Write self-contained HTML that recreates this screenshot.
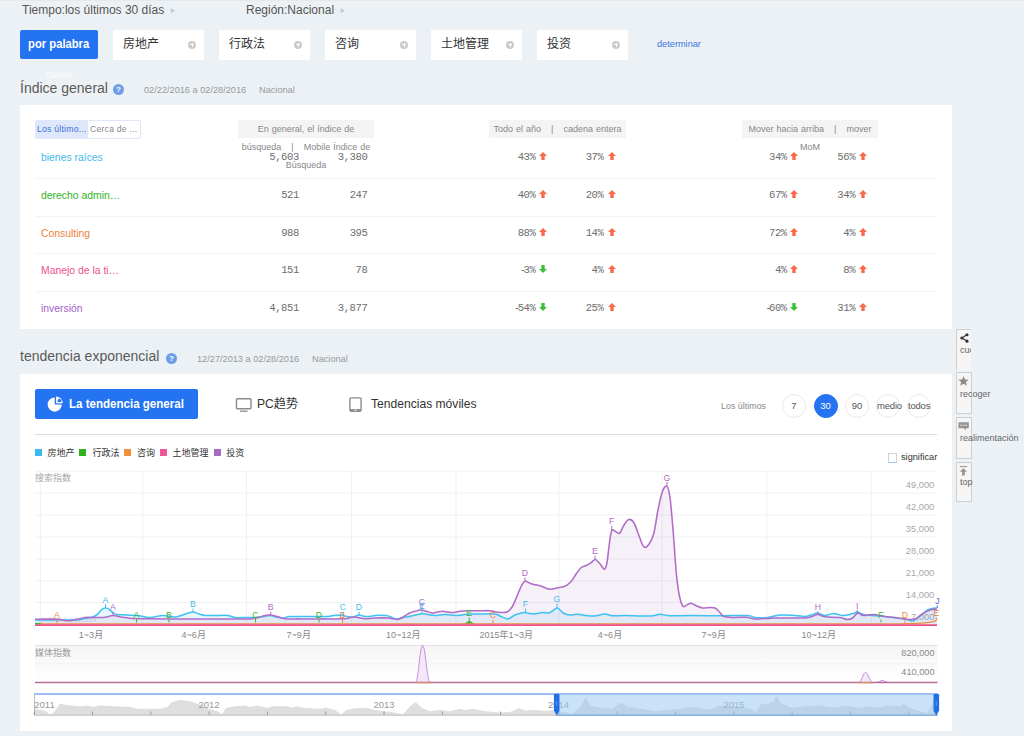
<!DOCTYPE html>
<html lang="es">
<head>
<meta charset="utf-8">
<title>Índice general</title>
<style>
*{box-sizing:border-box;margin:0;padding:0}
html,body{width:1024px;height:736px;overflow:hidden}
body{background:#ecf1f5;font-family:"Liberation Sans","Noto Sans CJK SC",sans-serif;color:#555;position:relative;font-size:12px}
.abs{position:absolute;white-space:nowrap}
.topline{left:0;top:0;width:1024px;height:1px;background:#e6e8e9}
.crumb{top:3px;font-size:12px;color:#555;line-height:15px}
.crumb i{font-style:normal;color:#c3c9ce;font-size:5px;margin-left:6px;position:relative;top:-2px}
.kwbtn{left:20px;top:30px;width:78px;height:29px;background:#2473f0;border-radius:2px;color:#fff;font-weight:bold;font-size:12px;line-height:29px;text-align:center}
.clave{left:45px;top:68px;color:#f6f9fb;font-weight:bold;font-size:11.2px}
.kw{top:30px;width:91px;height:30px;background:#fff;font-size:12px;color:#333;line-height:28px;padding-left:10px}
.kw b{position:absolute;right:8px;top:10.5px;width:8px;height:8px;border-radius:50%;background:#cbcbcb;font-weight:normal}
.kw b:before{content:"";position:absolute;left:2px;top:3.5px;width:4px;height:1px;background:#fff}
.kw b:after{content:"";position:absolute;left:3.5px;top:2px;width:1px;height:4px;background:#fff}
.det{left:657px;top:39px;font-size:9.2px;color:#3a76e0}
.h2{left:20px;font-size:14px;color:#5a5a5a;line-height:20px}
.q{width:11px;height:11px;border-radius:50%;background:#6d9fe8;color:#fff;font-size:8px;font-weight:bold;line-height:11px;text-align:center}
.sm{font-size:9.2px;color:#999;line-height:12px}
.panel{left:20px;width:932px;background:#fff}

#p1 .pill{position:absolute;top:15px;height:18px;background:#f4f4f4;color:#888;font-size:9px;line-height:18px;text-align:center;white-space:normal;word-spacing:0.5px}
#p1 .pill span{margin:0 10px}
.tog{position:absolute;left:15px;top:15px;width:106px;height:19px;border:1px solid #dfe8fb;border-radius:2px;font-size:8.6px;letter-spacing:0.25px;line-height:17px;color:#888;background:#fff}
.tog u{text-decoration:none;display:inline-block;width:52px;height:17px;background:#dfe8fb;color:#3a6fd8;padding-left:1px;margin-right:2px;vertical-align:top}
.row{position:absolute;left:15px;width:901px;height:38px;border-top:1px solid #f4f4f4}
.row.first{border-top:0}
.row .nm{position:absolute;left:6px;top:9px;font-size:10.4px;line-height:16px}
.row .v{position:absolute;top:8px;font-family:"Liberation Mono",monospace;font-size:10.6px;letter-spacing:-0.4px;line-height:16px;color:#6e6e6e;text-align:right;width:60px}
.up,.dn{position:absolute;top:11px;width:8px;height:8px}

.tabbtn{left:35px;top:389px;width:163px;height:30px;background:#2473f0;border-radius:2px;color:#fff;font-weight:bold;font-size:12px;line-height:31px;padding-left:34px}
.sq{display:inline-block;transform-origin:0 50%}
.tab{top:389px;height:30px;line-height:31px;font-size:12.1px;color:#333}
.hr2{left:35px;top:434px;width:902px;height:1px;background:#dcdcdc}
.lg{top:447px;font-size:9px;line-height:12px;color:#333}
.lgs{top:449px;width:7px;height:7px}
.rng{top:394px;width:24px;height:24px;border-radius:50%;border:1px solid #e9e9e9;background:#fff;color:#555;font-size:9.5px;line-height:22px;text-align:center}
.rng.on{background:#2473f0;border-color:#2473f0;color:#fff}
.side{left:956px;width:16px;background:#f5f5f5;border:1px solid #cfcfcf;font-size:9px;color:#666;overflow:visible}
.side span{position:absolute;left:3px;white-space:nowrap}
</style>
</head>
<body>
<div class="abs topline"></div>
<div class="abs crumb" style="left:22px">Tiempo:los últimos 30 días<i>▶</i></div>
<div class="abs crumb" style="left:246px">Región:Nacional<i>▶</i></div>

<div class="abs kwbtn"><span class="sq" style="transform:scaleX(.935);transform-origin:50% 50%">por palabra</span></div>
<div class="abs clave">clave</div>
<div class="abs kw" style="left:113px">房地产<b></b></div>
<div class="abs kw" style="left:219px">行政法<b></b></div>
<div class="abs kw" style="left:325px">咨询<b></b></div>
<div class="abs kw" style="left:431px">土地管理<b></b></div>
<div class="abs kw" style="left:537px">投资<b></b></div>
<div class="abs det">determinar</div>

<div class="abs h2" style="top:78px">Índice general</div>
<div class="abs q" style="left:113px;top:84px">?</div>
<div class="abs sm" style="left:144px;top:84px">02/22/2016 a 02/28/2016</div>
<div class="abs sm" style="left:259px;top:84px">Nacional</div>

<div class="abs panel" id="p1" style="top:105px;height:224px">
<div class="tog"><u>Los último...</u>Cerca de ...</div>
<div class="pill" style="left:218px;width:136px">En general, el índice de búsqueda<span>|</span>Mobile Índice de Búsqueda</div>
<div class="pill" style="left:469px;width:137px">Todo el año<span>|</span>cadena entera</div>
<div class="pill" style="left:722px;width:136px">Mover hacia arriba<span>|</span>mover MoM</div>
<div class="row first" style="top:36px"><span class="nm" style="color:#45b9ec">bienes raíces</span><span class="v" style="left:204.0px">5,603</span><span class="v" style="left:272.5px">3,380</span><span class="v" style="left:440.5px">43%</span><svg class="up" style="left:504px" viewBox="0 0 8 8"><path d="M4 0L8 4H5.7V8H2.3V4H0Z" fill="#f96a4a"/></svg><span class="v" style="left:508.5px">37%</span><svg class="up" style="left:573px" viewBox="0 0 8 8"><path d="M4 0L8 4H5.7V8H2.3V4H0Z" fill="#f96a4a"/></svg><span class="v" style="left:691.8px">34%</span><svg class="up" style="left:755px" viewBox="0 0 8 8"><path d="M4 0L8 4H5.7V8H2.3V4H0Z" fill="#f96a4a"/></svg><span class="v" style="left:760.2px">56%</span><svg class="up" style="left:824px" viewBox="0 0 8 8"><path d="M4 0L8 4H5.7V8H2.3V4H0Z" fill="#f96a4a"/></svg></div>
<div class="row" style="top:73px"><span class="nm" style="color:#2fb31e">derecho admin…</span><span class="v" style="left:204.0px">521</span><span class="v" style="left:272.5px">247</span><span class="v" style="left:440.5px">40%</span><svg class="up" style="left:504px" viewBox="0 0 8 8"><path d="M4 0L8 4H5.7V8H2.3V4H0Z" fill="#f96a4a"/></svg><span class="v" style="left:508.5px">20%</span><svg class="up" style="left:573px" viewBox="0 0 8 8"><path d="M4 0L8 4H5.7V8H2.3V4H0Z" fill="#f96a4a"/></svg><span class="v" style="left:691.8px">67%</span><svg class="up" style="left:755px" viewBox="0 0 8 8"><path d="M4 0L8 4H5.7V8H2.3V4H0Z" fill="#f96a4a"/></svg><span class="v" style="left:760.2px">34%</span><svg class="up" style="left:824px" viewBox="0 0 8 8"><path d="M4 0L8 4H5.7V8H2.3V4H0Z" fill="#f96a4a"/></svg></div>
<div class="row" style="top:111px"><span class="nm" style="color:#ef7f3a">Consulting</span><span class="v" style="left:204.0px">988</span><span class="v" style="left:272.5px">395</span><span class="v" style="left:440.5px">88%</span><svg class="up" style="left:504px" viewBox="0 0 8 8"><path d="M4 0L8 4H5.7V8H2.3V4H0Z" fill="#f96a4a"/></svg><span class="v" style="left:508.5px">14%</span><svg class="up" style="left:573px" viewBox="0 0 8 8"><path d="M4 0L8 4H5.7V8H2.3V4H0Z" fill="#f96a4a"/></svg><span class="v" style="left:691.8px">72%</span><svg class="up" style="left:755px" viewBox="0 0 8 8"><path d="M4 0L8 4H5.7V8H2.3V4H0Z" fill="#f96a4a"/></svg><span class="v" style="left:760.2px">4%</span><svg class="up" style="left:824px" viewBox="0 0 8 8"><path d="M4 0L8 4H5.7V8H2.3V4H0Z" fill="#f96a4a"/></svg></div>
<div class="row" style="top:148px"><span class="nm" style="color:#f0508c">Manejo de la ti…</span><span class="v" style="left:204.0px">151</span><span class="v" style="left:272.5px">78</span><span class="v" style="left:440.5px"><span style="letter-spacing:-2.6px">-</span>3%</span><svg class="dn" style="left:504px" viewBox="0 0 8 8"><path d="M4 8L8 4H5.7V0H2.3V4H0Z" fill="#3cc03c"/></svg><span class="v" style="left:508.5px">4%</span><svg class="up" style="left:573px" viewBox="0 0 8 8"><path d="M4 0L8 4H5.7V8H2.3V4H0Z" fill="#f96a4a"/></svg><span class="v" style="left:691.8px">4%</span><svg class="up" style="left:755px" viewBox="0 0 8 8"><path d="M4 0L8 4H5.7V8H2.3V4H0Z" fill="#f96a4a"/></svg><span class="v" style="left:760.2px">8%</span><svg class="up" style="left:824px" viewBox="0 0 8 8"><path d="M4 0L8 4H5.7V8H2.3V4H0Z" fill="#f96a4a"/></svg></div>
<div class="row" style="top:186px"><span class="nm" style="color:#a460c4">inversión</span><span class="v" style="left:204.0px">4,851</span><span class="v" style="left:272.5px">3,877</span><span class="v" style="left:440.5px"><span style="letter-spacing:-2.6px">-</span>54%</span><svg class="dn" style="left:504px" viewBox="0 0 8 8"><path d="M4 8L8 4H5.7V0H2.3V4H0Z" fill="#3cc03c"/></svg><span class="v" style="left:508.5px">25%</span><svg class="up" style="left:573px" viewBox="0 0 8 8"><path d="M4 0L8 4H5.7V8H2.3V4H0Z" fill="#f96a4a"/></svg><span class="v" style="left:691.8px"><span style="letter-spacing:-2.6px">-</span>60%</span><svg class="dn" style="left:755px" viewBox="0 0 8 8"><path d="M4 8L8 4H5.7V0H2.3V4H0Z" fill="#3cc03c"/></svg><span class="v" style="left:760.2px">31%</span><svg class="up" style="left:824px" viewBox="0 0 8 8"><path d="M4 0L8 4H5.7V8H2.3V4H0Z" fill="#f96a4a"/></svg></div>
</div>

<div class="abs h2" style="top:346px">tendencia exponencial</div>
<div class="abs q" style="left:166px;top:353px">?</div>
<div class="abs sm" style="left:197px;top:353px">12/27/2013 a 02/28/2016</div>
<div class="abs sm" style="left:312px;top:353px">Nacional</div>

<div class="abs panel" id="p2" style="top:374px;height:357px"></div>
<svg class="abs" style="left:20px;top:375px" width="932" height="355" viewBox="20 375 932 355" font-family="Liberation Sans, Noto Sans CJK SC, sans-serif">
<g stroke="#f0f0f0" stroke-width="1">
<line x1="35" y1="471.2" x2="937" y2="471.2"/>
<line x1="35" y1="493.0" x2="937" y2="493.0"/>
<line x1="35" y1="515.0" x2="937" y2="515.0"/>
<line x1="35" y1="537.0" x2="937" y2="537.0"/>
<line x1="35" y1="559.0" x2="937" y2="559.0"/>
<line x1="35" y1="580.8" x2="937" y2="580.8"/>
<line x1="35" y1="602.6" x2="937" y2="602.6"/>
<line x1="40.3" y1="471" x2="40.3" y2="625"/>
<line x1="142.8" y1="471" x2="142.8" y2="625"/>
<line x1="246.6" y1="471" x2="246.6" y2="625"/>
<line x1="351.6" y1="471" x2="351.6" y2="625"/>
<line x1="456.0" y1="471" x2="456.0" y2="625"/>
<line x1="559.0" y1="471" x2="559.0" y2="625"/>
<line x1="662.0" y1="471" x2="662.0" y2="625"/>
<line x1="766.8" y1="471" x2="766.8" y2="625"/>
<line x1="871.2" y1="471" x2="871.2" y2="625"/>
</g>
<g font-size="9.3" fill="#a8a8a8" text-anchor="end">
<text x="934.3" y="488.4">49,000</text>
<text x="934.3" y="510.4">42,000</text>
<text x="934.3" y="532.4">35,000</text>
<text x="934.3" y="554.4">28,000</text>
<text x="934.3" y="576.1">21,000</text>
<text x="934.3" y="598.4">14,000</text>
<text x="934.3" y="620.4">7,000</text>
</g>
<text x="35" y="481.3" font-size="9" fill="#aaa">搜索指数</text>
<text x="38" y="622" font-size="7" fill="#ddd">@index.baidu.com</text>
<path d="M35.00 620.00 C38.33 620.00 48.33 620.00 55.00 620.00 C61.67 620.00 70.00 620.23 75.00 620.00 C80.00 619.77 82.08 619.10 85.00 618.60 C87.92 618.10 90.50 617.67 92.50 617.00 C94.50 616.33 95.58 615.72 97.00 614.60 C98.42 613.48 99.92 611.33 101.00 610.30 C102.08 609.27 102.75 608.78 103.50 608.40 C104.25 608.02 104.83 608.00 105.50 608.00 C106.17 608.00 106.75 608.02 107.50 608.40 C108.25 608.78 109.00 609.53 110.00 610.30 C111.00 611.07 112.25 612.30 113.50 613.00 C114.75 613.70 115.25 614.17 117.50 614.50 C119.75 614.83 123.67 614.83 127.00 615.00 C130.33 615.17 134.67 615.22 137.50 615.50 C140.33 615.78 141.92 616.37 144.00 616.70 C146.08 617.03 148.00 617.53 150.00 617.50 C152.00 617.47 153.92 616.83 156.00 616.50 C158.08 616.17 160.17 615.53 162.50 615.50 C164.83 615.47 167.75 616.05 170.00 616.30 C172.25 616.55 173.67 617.30 176.00 617.00 C178.33 616.70 181.25 615.33 184.00 614.50 C186.75 613.67 190.00 612.08 192.50 612.00 C195.00 611.92 196.92 613.42 199.00 614.00 C201.08 614.58 202.17 615.25 205.00 615.50 C207.83 615.75 212.25 615.50 216.00 615.50 C219.75 615.50 224.33 615.17 227.50 615.50 C230.67 615.83 232.08 617.17 235.00 617.50 C237.92 617.83 241.67 617.50 245.00 617.50 C248.33 617.50 252.17 617.62 255.00 617.50 C257.83 617.38 259.50 617.13 262.00 616.80 C264.50 616.47 267.67 615.47 270.00 615.50 C272.33 615.53 273.92 616.58 276.00 617.00 C278.08 617.42 280.17 618.08 282.50 618.00 C284.83 617.92 286.25 616.75 290.00 616.50 C293.75 616.25 299.17 616.50 305.00 616.50 C310.83 616.50 320.67 616.58 325.00 616.50 C329.33 616.42 328.92 616.25 331.00 616.00 C333.08 615.75 335.17 615.00 337.50 615.00 C339.83 615.00 342.50 615.67 345.00 616.00 C347.50 616.33 350.21 617.17 352.50 617.00 C354.79 616.83 357.00 615.17 358.75 615.00 C360.50 614.83 361.54 615.75 363.00 616.00 C364.46 616.25 365.08 616.62 367.50 616.50 C369.92 616.38 374.42 615.42 377.50 615.25 C380.58 615.08 383.75 615.21 386.00 615.50 C388.25 615.79 389.33 616.42 391.00 617.00 C392.67 617.58 394.00 618.88 396.00 619.00 C398.00 619.12 400.67 618.16 403.00 617.70 C405.33 617.24 407.83 616.70 410.00 616.25 C412.17 615.80 413.92 615.42 416.00 615.00 C418.08 614.58 420.33 613.78 422.50 613.75 C424.67 613.72 426.92 614.51 429.00 614.80 C431.08 615.09 433.17 615.47 435.00 615.50 C436.83 615.53 438.33 615.17 440.00 615.00 C441.67 614.83 443.17 614.50 445.00 614.50 C446.83 614.50 448.92 614.83 451.00 615.00 C453.08 615.17 455.17 615.57 457.50 615.50 C459.83 615.43 462.50 614.85 465.00 614.60 C467.50 614.35 469.33 614.10 472.50 614.00 C475.67 613.90 480.25 614.00 484.00 614.00 C487.75 614.00 492.17 613.58 495.00 614.00 C497.83 614.42 498.92 615.67 501.00 616.50 C503.08 617.33 505.83 618.83 507.50 619.00 C509.17 619.17 509.75 618.17 511.00 617.50 C512.25 616.83 513.50 615.68 515.00 615.00 C516.50 614.32 518.33 613.82 520.00 613.40 C521.67 612.98 523.50 612.50 525.00 612.50 C526.50 612.50 527.54 613.15 529.00 613.40 C530.46 613.65 532.25 614.03 533.75 614.00 C535.25 613.97 536.54 613.45 538.00 613.20 C539.46 612.95 540.71 612.53 542.50 612.50 C544.29 612.47 547.00 613.33 548.75 613.00 C550.50 612.67 551.62 611.33 553.00 610.50 C554.38 609.67 555.75 608.00 557.00 608.00 C558.25 608.00 559.38 609.62 560.50 610.50 C561.62 611.38 562.17 612.50 563.75 613.25 C565.33 614.00 567.71 614.83 570.00 615.00 C572.29 615.17 574.17 614.08 577.50 614.25 C580.83 614.42 586.67 615.79 590.00 616.00 C593.33 616.21 595.00 615.83 597.50 615.50 C600.00 615.17 602.50 613.96 605.00 614.00 C607.50 614.04 609.17 615.50 612.50 615.75 C615.83 616.00 618.75 615.46 625.00 615.50 C631.25 615.54 644.17 616.21 650.00 616.00 C655.83 615.79 656.67 614.29 660.00 614.25 C663.33 614.21 665.00 615.54 670.00 615.75 C675.00 615.96 681.67 615.51 690.00 615.50 C698.33 615.49 710.42 615.70 720.00 615.70 C729.58 615.70 741.67 615.20 747.50 615.50 C753.33 615.80 751.67 617.17 755.00 617.50 C758.33 617.83 763.33 617.92 767.50 617.50 C771.67 617.08 775.42 615.33 780.00 615.00 C784.58 614.67 790.83 615.25 795.00 615.50 C799.17 615.75 802.33 616.58 805.00 616.50 C807.67 616.42 808.92 615.58 811.00 615.00 C813.08 614.42 815.83 613.12 817.50 613.00 C819.17 612.88 819.75 613.88 821.00 614.30 C822.25 614.72 823.67 615.48 825.00 615.50 C826.33 615.52 827.54 614.73 829.00 614.40 C830.46 614.07 832.25 613.48 833.75 613.50 C835.25 613.52 836.54 614.17 838.00 614.50 C839.46 614.83 841.17 615.38 842.50 615.50 C843.83 615.62 844.75 615.37 846.00 615.20 C847.25 615.03 848.67 614.83 850.00 614.50 C851.33 614.17 852.75 613.62 854.00 613.20 C855.25 612.78 856.33 611.95 857.50 612.00 C858.67 612.05 859.75 613.00 861.00 613.50 C862.25 614.00 863.17 614.67 865.00 615.00 C866.83 615.33 869.50 615.33 872.00 615.50 C874.50 615.67 876.58 615.67 880.00 616.00 C883.42 616.33 888.33 617.00 892.50 617.50 C896.67 618.00 901.67 618.42 905.00 619.00 C908.33 619.58 910.67 621.00 912.50 621.00 C914.33 621.00 914.75 619.79 916.00 619.00 C917.25 618.21 918.67 617.28 920.00 616.25 C921.33 615.22 922.75 613.84 924.00 612.80 C925.25 611.76 926.17 610.70 927.50 610.00 C928.83 609.30 930.42 608.93 932.00 608.60 C933.58 608.27 936.17 608.10 937.00 608.00 L937.00 624.50 L35.00 624.50 Z" fill="#3fbdf0" fill-opacity="0.12"/>
<path d="M35.00 619.25 C38.75 619.25 52.08 619.00 57.50 619.25 C62.92 619.50 64.42 620.71 67.50 620.75 C70.58 620.79 73.08 620.04 76.00 619.50 C78.92 618.96 81.83 617.83 85.00 617.50 C88.17 617.17 91.67 617.53 95.00 617.50 C98.33 617.47 102.00 617.63 105.00 617.30 C108.00 616.97 110.33 615.55 113.00 615.50 C115.67 615.45 118.17 616.54 121.00 617.00 C123.83 617.46 126.00 617.95 130.00 618.25 C134.00 618.55 138.33 618.67 145.00 618.80 C151.67 618.92 160.83 618.97 170.00 619.00 C179.17 619.03 190.00 619.00 200.00 619.00 C210.00 619.00 221.67 619.00 230.00 619.00 C238.33 619.00 245.33 619.25 250.00 619.00 C254.67 618.75 255.67 618.03 258.00 617.50 C260.33 616.97 262.00 616.22 264.00 615.80 C266.00 615.38 267.83 614.88 270.00 615.00 C272.17 615.12 274.50 615.88 277.00 616.50 C279.50 617.12 281.17 618.35 285.00 618.75 C288.83 619.15 294.17 618.88 300.00 618.90 C305.83 618.92 312.50 618.92 320.00 618.90 C327.50 618.88 340.00 618.98 345.00 618.75 C350.00 618.52 348.33 617.79 350.00 617.50 C351.67 617.21 353.33 616.92 355.00 617.00 C356.67 617.08 358.33 617.71 360.00 618.00 C361.67 618.29 362.50 618.75 365.00 618.75 C367.50 618.75 371.17 618.12 375.00 618.00 C378.83 617.88 384.25 617.75 388.00 618.00 C391.75 618.25 394.83 619.75 397.50 619.50 C400.17 619.25 401.92 617.62 404.00 616.50 C406.08 615.38 408.17 613.67 410.00 612.80 C411.83 611.92 413.17 611.72 415.00 611.25 C416.83 610.78 419.00 609.96 421.00 610.00 C423.00 610.04 425.08 611.00 427.00 611.50 C428.92 612.00 430.75 612.92 432.50 613.00 C434.25 613.08 435.83 612.29 437.50 612.00 C439.17 611.71 440.83 611.25 442.50 611.25 C444.17 611.25 445.83 611.79 447.50 612.00 C449.17 612.21 450.42 612.62 452.50 612.50 C454.58 612.38 457.50 611.59 460.00 611.30 C462.50 611.01 464.17 610.84 467.50 610.75 C470.83 610.66 476.25 610.75 480.00 610.75 C483.75 610.75 486.67 610.46 490.00 610.75 C493.33 611.04 497.08 612.33 500.00 612.50 C502.92 612.67 505.42 612.79 507.50 611.75 C509.58 610.71 510.83 609.04 512.50 606.25 C514.17 603.46 516.04 598.33 517.50 595.00 C518.96 591.67 520.00 588.54 521.25 586.25 C522.50 583.96 523.33 581.67 525.00 581.25 C526.67 580.83 528.75 583.00 531.25 583.75 C533.75 584.50 536.88 584.83 540.00 585.75 C543.12 586.67 546.88 588.96 550.00 589.25 C553.12 589.54 556.25 588.00 558.75 587.50 C561.25 587.00 562.92 587.29 565.00 586.25 C567.08 585.21 569.38 583.33 571.25 581.25 C573.12 579.17 574.58 576.04 576.25 573.75 C577.92 571.46 579.58 568.88 581.25 567.50 C582.92 566.12 584.58 566.33 586.25 565.50 C587.92 564.67 589.71 563.50 591.25 562.50 C592.79 561.50 594.04 559.29 595.50 559.50 C596.96 559.71 598.50 562.12 600.00 563.75 C601.50 565.38 603.33 569.46 604.50 569.25 C605.67 569.04 606.17 566.96 607.00 562.50 C607.83 558.04 608.71 547.83 609.50 542.50 C610.29 537.17 610.83 532.38 611.75 530.50 C612.67 528.62 613.71 530.79 615.00 531.25 C616.29 531.71 618.04 534.21 619.50 533.25 C620.96 532.29 622.21 527.79 623.75 525.50 C625.29 523.21 627.08 520.00 628.75 519.50 C630.42 519.00 632.08 519.92 633.75 522.50 C635.42 525.08 637.08 530.96 638.75 535.00 C640.42 539.04 642.08 545.17 643.75 546.75 C645.42 548.33 647.08 546.67 648.75 544.50 C650.42 542.33 652.21 539.50 653.75 533.75 C655.29 528.00 656.54 517.08 658.00 510.00 C659.46 502.92 661.00 495.21 662.50 491.25 C664.00 487.29 665.75 485.21 667.00 486.25 C668.25 487.29 668.96 489.79 670.00 497.50 C671.04 505.21 672.21 520.00 673.25 532.50 C674.29 545.00 675.25 562.08 676.25 572.50 C677.25 582.92 678.12 589.38 679.25 595.00 C680.38 600.62 681.62 604.67 683.00 606.25 C684.38 607.83 686.12 605.00 687.50 604.50 C688.88 604.00 689.79 603.04 691.25 603.25 C692.71 603.46 694.38 604.96 696.25 605.75 C698.12 606.54 700.21 607.71 702.50 608.00 C704.79 608.29 707.92 607.50 710.00 607.50 C712.08 607.50 713.54 607.38 715.00 608.00 C716.46 608.62 717.29 609.88 718.75 611.25 C720.21 612.62 721.46 615.21 723.75 616.25 C726.04 617.29 728.79 617.34 732.50 617.50 C736.21 617.66 742.25 616.95 746.00 617.20 C749.75 617.45 751.83 618.77 755.00 619.00 C758.17 619.23 761.67 618.77 765.00 618.60 C768.33 618.43 770.83 618.10 775.00 618.00 C779.17 617.90 785.00 618.00 790.00 618.00 C795.00 618.00 801.50 618.20 805.00 618.00 C808.50 617.80 808.92 617.38 811.00 616.80 C813.08 616.22 815.50 614.60 817.50 614.50 C819.50 614.40 821.33 615.78 823.00 616.20 C824.67 616.62 824.67 616.78 827.50 617.00 C830.33 617.22 836.67 617.08 840.00 617.50 C843.33 617.92 845.42 619.42 847.50 619.50 C849.58 619.58 850.83 619.08 852.50 618.00 C854.17 616.92 856.08 613.57 857.50 613.00 C858.92 612.43 859.75 614.18 861.00 614.60 C862.25 615.02 863.50 615.47 865.00 615.50 C866.50 615.53 868.33 614.97 870.00 614.80 C871.67 614.63 873.33 614.37 875.00 614.50 C876.67 614.63 878.33 615.27 880.00 615.60 C881.67 615.93 882.50 616.18 885.00 616.50 C887.50 616.82 891.67 617.08 895.00 617.50 C898.33 617.92 901.67 618.75 905.00 619.00 C908.33 619.25 912.08 619.88 915.00 619.00 C917.92 618.12 920.00 615.25 922.50 613.75 C925.00 612.25 927.58 610.79 930.00 610.00 C932.42 609.21 935.83 609.17 937.00 609.00 L937.00 624.50 L35.00 624.50 Z" fill="#a568c2" fill-opacity="0.10"/>
<path d="M35.00 620.00 C38.33 620.00 48.33 620.00 55.00 620.00 C61.67 620.00 70.00 620.23 75.00 620.00 C80.00 619.77 82.08 619.10 85.00 618.60 C87.92 618.10 90.50 617.67 92.50 617.00 C94.50 616.33 95.58 615.72 97.00 614.60 C98.42 613.48 99.92 611.33 101.00 610.30 C102.08 609.27 102.75 608.78 103.50 608.40 C104.25 608.02 104.83 608.00 105.50 608.00 C106.17 608.00 106.75 608.02 107.50 608.40 C108.25 608.78 109.00 609.53 110.00 610.30 C111.00 611.07 112.25 612.30 113.50 613.00 C114.75 613.70 115.25 614.17 117.50 614.50 C119.75 614.83 123.67 614.83 127.00 615.00 C130.33 615.17 134.67 615.22 137.50 615.50 C140.33 615.78 141.92 616.37 144.00 616.70 C146.08 617.03 148.00 617.53 150.00 617.50 C152.00 617.47 153.92 616.83 156.00 616.50 C158.08 616.17 160.17 615.53 162.50 615.50 C164.83 615.47 167.75 616.05 170.00 616.30 C172.25 616.55 173.67 617.30 176.00 617.00 C178.33 616.70 181.25 615.33 184.00 614.50 C186.75 613.67 190.00 612.08 192.50 612.00 C195.00 611.92 196.92 613.42 199.00 614.00 C201.08 614.58 202.17 615.25 205.00 615.50 C207.83 615.75 212.25 615.50 216.00 615.50 C219.75 615.50 224.33 615.17 227.50 615.50 C230.67 615.83 232.08 617.17 235.00 617.50 C237.92 617.83 241.67 617.50 245.00 617.50 C248.33 617.50 252.17 617.62 255.00 617.50 C257.83 617.38 259.50 617.13 262.00 616.80 C264.50 616.47 267.67 615.47 270.00 615.50 C272.33 615.53 273.92 616.58 276.00 617.00 C278.08 617.42 280.17 618.08 282.50 618.00 C284.83 617.92 286.25 616.75 290.00 616.50 C293.75 616.25 299.17 616.50 305.00 616.50 C310.83 616.50 320.67 616.58 325.00 616.50 C329.33 616.42 328.92 616.25 331.00 616.00 C333.08 615.75 335.17 615.00 337.50 615.00 C339.83 615.00 342.50 615.67 345.00 616.00 C347.50 616.33 350.21 617.17 352.50 617.00 C354.79 616.83 357.00 615.17 358.75 615.00 C360.50 614.83 361.54 615.75 363.00 616.00 C364.46 616.25 365.08 616.62 367.50 616.50 C369.92 616.38 374.42 615.42 377.50 615.25 C380.58 615.08 383.75 615.21 386.00 615.50 C388.25 615.79 389.33 616.42 391.00 617.00 C392.67 617.58 394.00 618.88 396.00 619.00 C398.00 619.12 400.67 618.16 403.00 617.70 C405.33 617.24 407.83 616.70 410.00 616.25 C412.17 615.80 413.92 615.42 416.00 615.00 C418.08 614.58 420.33 613.78 422.50 613.75 C424.67 613.72 426.92 614.51 429.00 614.80 C431.08 615.09 433.17 615.47 435.00 615.50 C436.83 615.53 438.33 615.17 440.00 615.00 C441.67 614.83 443.17 614.50 445.00 614.50 C446.83 614.50 448.92 614.83 451.00 615.00 C453.08 615.17 455.17 615.57 457.50 615.50 C459.83 615.43 462.50 614.85 465.00 614.60 C467.50 614.35 469.33 614.10 472.50 614.00 C475.67 613.90 480.25 614.00 484.00 614.00 C487.75 614.00 492.17 613.58 495.00 614.00 C497.83 614.42 498.92 615.67 501.00 616.50 C503.08 617.33 505.83 618.83 507.50 619.00 C509.17 619.17 509.75 618.17 511.00 617.50 C512.25 616.83 513.50 615.68 515.00 615.00 C516.50 614.32 518.33 613.82 520.00 613.40 C521.67 612.98 523.50 612.50 525.00 612.50 C526.50 612.50 527.54 613.15 529.00 613.40 C530.46 613.65 532.25 614.03 533.75 614.00 C535.25 613.97 536.54 613.45 538.00 613.20 C539.46 612.95 540.71 612.53 542.50 612.50 C544.29 612.47 547.00 613.33 548.75 613.00 C550.50 612.67 551.62 611.33 553.00 610.50 C554.38 609.67 555.75 608.00 557.00 608.00 C558.25 608.00 559.38 609.62 560.50 610.50 C561.62 611.38 562.17 612.50 563.75 613.25 C565.33 614.00 567.71 614.83 570.00 615.00 C572.29 615.17 574.17 614.08 577.50 614.25 C580.83 614.42 586.67 615.79 590.00 616.00 C593.33 616.21 595.00 615.83 597.50 615.50 C600.00 615.17 602.50 613.96 605.00 614.00 C607.50 614.04 609.17 615.50 612.50 615.75 C615.83 616.00 618.75 615.46 625.00 615.50 C631.25 615.54 644.17 616.21 650.00 616.00 C655.83 615.79 656.67 614.29 660.00 614.25 C663.33 614.21 665.00 615.54 670.00 615.75 C675.00 615.96 681.67 615.51 690.00 615.50 C698.33 615.49 710.42 615.70 720.00 615.70 C729.58 615.70 741.67 615.20 747.50 615.50 C753.33 615.80 751.67 617.17 755.00 617.50 C758.33 617.83 763.33 617.92 767.50 617.50 C771.67 617.08 775.42 615.33 780.00 615.00 C784.58 614.67 790.83 615.25 795.00 615.50 C799.17 615.75 802.33 616.58 805.00 616.50 C807.67 616.42 808.92 615.58 811.00 615.00 C813.08 614.42 815.83 613.12 817.50 613.00 C819.17 612.88 819.75 613.88 821.00 614.30 C822.25 614.72 823.67 615.48 825.00 615.50 C826.33 615.52 827.54 614.73 829.00 614.40 C830.46 614.07 832.25 613.48 833.75 613.50 C835.25 613.52 836.54 614.17 838.00 614.50 C839.46 614.83 841.17 615.38 842.50 615.50 C843.83 615.62 844.75 615.37 846.00 615.20 C847.25 615.03 848.67 614.83 850.00 614.50 C851.33 614.17 852.75 613.62 854.00 613.20 C855.25 612.78 856.33 611.95 857.50 612.00 C858.67 612.05 859.75 613.00 861.00 613.50 C862.25 614.00 863.17 614.67 865.00 615.00 C866.83 615.33 869.50 615.33 872.00 615.50 C874.50 615.67 876.58 615.67 880.00 616.00 C883.42 616.33 888.33 617.00 892.50 617.50 C896.67 618.00 901.67 618.42 905.00 619.00 C908.33 619.58 910.67 621.00 912.50 621.00 C914.33 621.00 914.75 619.79 916.00 619.00 C917.25 618.21 918.67 617.28 920.00 616.25 C921.33 615.22 922.75 613.84 924.00 612.80 C925.25 611.76 926.17 610.70 927.50 610.00 C928.83 609.30 930.42 608.93 932.00 608.60 C933.58 608.27 936.17 608.10 937.00 608.00" fill="none" stroke="#3fc2f2" stroke-width="1.5" stroke-linejoin="round"/>
<path d="M35.00 619.25 C38.75 619.25 52.08 619.00 57.50 619.25 C62.92 619.50 64.42 620.71 67.50 620.75 C70.58 620.79 73.08 620.04 76.00 619.50 C78.92 618.96 81.83 617.83 85.00 617.50 C88.17 617.17 91.67 617.53 95.00 617.50 C98.33 617.47 102.00 617.63 105.00 617.30 C108.00 616.97 110.33 615.55 113.00 615.50 C115.67 615.45 118.17 616.54 121.00 617.00 C123.83 617.46 126.00 617.95 130.00 618.25 C134.00 618.55 138.33 618.67 145.00 618.80 C151.67 618.92 160.83 618.97 170.00 619.00 C179.17 619.03 190.00 619.00 200.00 619.00 C210.00 619.00 221.67 619.00 230.00 619.00 C238.33 619.00 245.33 619.25 250.00 619.00 C254.67 618.75 255.67 618.03 258.00 617.50 C260.33 616.97 262.00 616.22 264.00 615.80 C266.00 615.38 267.83 614.88 270.00 615.00 C272.17 615.12 274.50 615.88 277.00 616.50 C279.50 617.12 281.17 618.35 285.00 618.75 C288.83 619.15 294.17 618.88 300.00 618.90 C305.83 618.92 312.50 618.92 320.00 618.90 C327.50 618.88 340.00 618.98 345.00 618.75 C350.00 618.52 348.33 617.79 350.00 617.50 C351.67 617.21 353.33 616.92 355.00 617.00 C356.67 617.08 358.33 617.71 360.00 618.00 C361.67 618.29 362.50 618.75 365.00 618.75 C367.50 618.75 371.17 618.12 375.00 618.00 C378.83 617.88 384.25 617.75 388.00 618.00 C391.75 618.25 394.83 619.75 397.50 619.50 C400.17 619.25 401.92 617.62 404.00 616.50 C406.08 615.38 408.17 613.67 410.00 612.80 C411.83 611.92 413.17 611.72 415.00 611.25 C416.83 610.78 419.00 609.96 421.00 610.00 C423.00 610.04 425.08 611.00 427.00 611.50 C428.92 612.00 430.75 612.92 432.50 613.00 C434.25 613.08 435.83 612.29 437.50 612.00 C439.17 611.71 440.83 611.25 442.50 611.25 C444.17 611.25 445.83 611.79 447.50 612.00 C449.17 612.21 450.42 612.62 452.50 612.50 C454.58 612.38 457.50 611.59 460.00 611.30 C462.50 611.01 464.17 610.84 467.50 610.75 C470.83 610.66 476.25 610.75 480.00 610.75 C483.75 610.75 486.67 610.46 490.00 610.75 C493.33 611.04 497.08 612.33 500.00 612.50 C502.92 612.67 505.42 612.79 507.50 611.75 C509.58 610.71 510.83 609.04 512.50 606.25 C514.17 603.46 516.04 598.33 517.50 595.00 C518.96 591.67 520.00 588.54 521.25 586.25 C522.50 583.96 523.33 581.67 525.00 581.25 C526.67 580.83 528.75 583.00 531.25 583.75 C533.75 584.50 536.88 584.83 540.00 585.75 C543.12 586.67 546.88 588.96 550.00 589.25 C553.12 589.54 556.25 588.00 558.75 587.50 C561.25 587.00 562.92 587.29 565.00 586.25 C567.08 585.21 569.38 583.33 571.25 581.25 C573.12 579.17 574.58 576.04 576.25 573.75 C577.92 571.46 579.58 568.88 581.25 567.50 C582.92 566.12 584.58 566.33 586.25 565.50 C587.92 564.67 589.71 563.50 591.25 562.50 C592.79 561.50 594.04 559.29 595.50 559.50 C596.96 559.71 598.50 562.12 600.00 563.75 C601.50 565.38 603.33 569.46 604.50 569.25 C605.67 569.04 606.17 566.96 607.00 562.50 C607.83 558.04 608.71 547.83 609.50 542.50 C610.29 537.17 610.83 532.38 611.75 530.50 C612.67 528.62 613.71 530.79 615.00 531.25 C616.29 531.71 618.04 534.21 619.50 533.25 C620.96 532.29 622.21 527.79 623.75 525.50 C625.29 523.21 627.08 520.00 628.75 519.50 C630.42 519.00 632.08 519.92 633.75 522.50 C635.42 525.08 637.08 530.96 638.75 535.00 C640.42 539.04 642.08 545.17 643.75 546.75 C645.42 548.33 647.08 546.67 648.75 544.50 C650.42 542.33 652.21 539.50 653.75 533.75 C655.29 528.00 656.54 517.08 658.00 510.00 C659.46 502.92 661.00 495.21 662.50 491.25 C664.00 487.29 665.75 485.21 667.00 486.25 C668.25 487.29 668.96 489.79 670.00 497.50 C671.04 505.21 672.21 520.00 673.25 532.50 C674.29 545.00 675.25 562.08 676.25 572.50 C677.25 582.92 678.12 589.38 679.25 595.00 C680.38 600.62 681.62 604.67 683.00 606.25 C684.38 607.83 686.12 605.00 687.50 604.50 C688.88 604.00 689.79 603.04 691.25 603.25 C692.71 603.46 694.38 604.96 696.25 605.75 C698.12 606.54 700.21 607.71 702.50 608.00 C704.79 608.29 707.92 607.50 710.00 607.50 C712.08 607.50 713.54 607.38 715.00 608.00 C716.46 608.62 717.29 609.88 718.75 611.25 C720.21 612.62 721.46 615.21 723.75 616.25 C726.04 617.29 728.79 617.34 732.50 617.50 C736.21 617.66 742.25 616.95 746.00 617.20 C749.75 617.45 751.83 618.77 755.00 619.00 C758.17 619.23 761.67 618.77 765.00 618.60 C768.33 618.43 770.83 618.10 775.00 618.00 C779.17 617.90 785.00 618.00 790.00 618.00 C795.00 618.00 801.50 618.20 805.00 618.00 C808.50 617.80 808.92 617.38 811.00 616.80 C813.08 616.22 815.50 614.60 817.50 614.50 C819.50 614.40 821.33 615.78 823.00 616.20 C824.67 616.62 824.67 616.78 827.50 617.00 C830.33 617.22 836.67 617.08 840.00 617.50 C843.33 617.92 845.42 619.42 847.50 619.50 C849.58 619.58 850.83 619.08 852.50 618.00 C854.17 616.92 856.08 613.57 857.50 613.00 C858.92 612.43 859.75 614.18 861.00 614.60 C862.25 615.02 863.50 615.47 865.00 615.50 C866.50 615.53 868.33 614.97 870.00 614.80 C871.67 614.63 873.33 614.37 875.00 614.50 C876.67 614.63 878.33 615.27 880.00 615.60 C881.67 615.93 882.50 616.18 885.00 616.50 C887.50 616.82 891.67 617.08 895.00 617.50 C898.33 617.92 901.67 618.75 905.00 619.00 C908.33 619.25 912.08 619.88 915.00 619.00 C917.92 618.12 920.00 615.25 922.50 613.75 C925.00 612.25 927.58 610.79 930.00 610.00 C932.42 609.21 935.83 609.17 937.00 609.00" fill="none" stroke="#b06cc6" stroke-width="1.55" stroke-linejoin="round"/>
<path d="M461.5 624 C466 623.6 467 620.9 469.3 620.9 C471.6 620.9 472.6 623.6 477 624Z" fill="#3cb52c"/>
<path d="M35 623.8H900C915 623.8 925 623 931 622.2C935 621.6 936.6 620.6 937 618.6" fill="none" stroke="#ee8a3c" stroke-width="1.3"/>
<path d="M35 625.1H937" stroke="#ee4f86" stroke-width="1.6"/>
<path d="M35 623.6H40.5" stroke="#3cb52c" stroke-width="1.2"/>
<g font-size="9.8" text-anchor="middle">
<text transform="translate(57.00 618.00) scale(.89 1)" fill="#ee8a3c">A</text>
<path d="M57.00 619.50V623.00" stroke="#ee8a3c" stroke-width="1"/>
<text transform="translate(105.50 602.50) scale(.89 1)" fill="#45bdf0">A</text>
<path d="M105.50 604.00V608.00" stroke="#45bdf0" stroke-width="1"/>
<text transform="translate(113.00 610.25) scale(.89 1)" fill="#b06cc6">A</text>
<path d="M113.00 611.75V615.50" stroke="#b06cc6" stroke-width="1"/>
<text transform="translate(136.50 617.50) scale(.89 1)" fill="#3cb52c">A</text>
<path d="M136.50 619.00V622.50" stroke="#3cb52c" stroke-width="1"/>
<text transform="translate(169.00 617.50) scale(.89 1)" fill="#3cb52c">B</text>
<path d="M169.00 619.00V622.50" stroke="#3cb52c" stroke-width="1"/>
<text transform="translate(193.00 607.25) scale(.89 1)" fill="#45bdf0">B</text>
<path d="M193.00 608.75V612.00" stroke="#45bdf0" stroke-width="1"/>
<text transform="translate(255.50 617.50) scale(.89 1)" fill="#3cb52c">C</text>
<path d="M255.50 619.00V622.50" stroke="#3cb52c" stroke-width="1"/>
<text transform="translate(270.75 610.25) scale(.89 1)" fill="#b06cc6">B</text>
<path d="M270.75 611.75V615.00" stroke="#b06cc6" stroke-width="1"/>
<text transform="translate(319.00 618.00) scale(.89 1)" fill="#3cb52c">D</text>
<path d="M319.00 619.50V622.50" stroke="#3cb52c" stroke-width="1"/>
<text transform="translate(342.50 618.00) scale(.89 1)" fill="#ee8a3c">B</text>
<path d="M342.50 619.50V623.00" stroke="#ee8a3c" stroke-width="1"/>
<text transform="translate(343.00 610.25) scale(.89 1)" fill="#45bdf0">C</text>
<path d="M343.00 611.75V615.00" stroke="#45bdf0" stroke-width="1"/>
<text transform="translate(359.00 610.25) scale(.89 1)" fill="#45bdf0">D</text>
<path d="M359.00 611.75V615.00" stroke="#45bdf0" stroke-width="1"/>
<text transform="translate(422.00 608.50) scale(.89 1)" fill="#45bdf0">E</text>
<path d="M422.00 610.00V613.75" stroke="#45bdf0" stroke-width="1"/>
<text transform="translate(422.00 604.75) scale(.89 1)" fill="#b06cc6">C</text>
<path d="M422.00 606.25V610.00" stroke="#b06cc6" stroke-width="1"/>
<text transform="translate(469.25 616.10) scale(.89 1)" fill="#3cb52c">E</text>
<path d="M469.25 617.60V621.00" stroke="#3cb52c" stroke-width="1"/>
<text transform="translate(493.00 618.00) scale(.89 1)" fill="#ee8a3c">C</text>
<path d="M493.00 619.50V623.00" stroke="#ee8a3c" stroke-width="1"/>
<text transform="translate(525.00 576.00) scale(.89 1)" fill="#b06cc6">D</text>
<path d="M525.00 577.50V581.25" stroke="#b06cc6" stroke-width="1"/>
<text transform="translate(525.50 607.25) scale(.89 1)" fill="#45bdf0">F</text>
<path d="M525.50 608.75V612.50" stroke="#45bdf0" stroke-width="1"/>
<text transform="translate(557.00 601.75) scale(.89 1)" fill="#45bdf0">G</text>
<path d="M557.00 603.25V608.00" stroke="#45bdf0" stroke-width="1"/>
<text transform="translate(595.00 554.00) scale(.89 1)" fill="#b06cc6">E</text>
<path d="M595.00 555.50V559.50" stroke="#b06cc6" stroke-width="1"/>
<text transform="translate(611.75 524.25) scale(.89 1)" fill="#b06cc6">F</text>
<path d="M611.75 525.75V530.50" stroke="#b06cc6" stroke-width="1"/>
<text transform="translate(667.00 480.50) scale(.89 1)" fill="#b06cc6">G</text>
<path d="M667.00 482.00V486.25" stroke="#b06cc6" stroke-width="1"/>
<text transform="translate(818.00 609.75) scale(.89 1)" fill="#b06cc6">H</text>
<path d="M818.00 611.25V614.50" stroke="#b06cc6" stroke-width="1"/>
<text transform="translate(857.25 608.50) scale(.89 1)" fill="#b06cc6">I</text>
<path d="M857.25 610.00V613.00" stroke="#b06cc6" stroke-width="1"/>
<text transform="translate(881.00 618.00) scale(.89 1)" fill="#3cb52c">F</text>
<path d="M881.00 619.50V622.50" stroke="#3cb52c" stroke-width="1"/>
<text transform="translate(905.00 618.00) scale(.89 1)" fill="#ee8a3c">D</text>
<path d="M905.00 619.50V623.00" stroke="#ee8a3c" stroke-width="1"/>
<text transform="translate(937.30 603.90) scale(.89 1)" fill="#6268d6">J</text>
<path d="M937.30 605.40V608.00" stroke="#6268d6" stroke-width="1"/>
<text transform="translate(936.30 615.90) scale(.89 1)" fill="#ea8440">E</text>
<path d="M936.30 617.40V618.50" stroke="#ea8440" stroke-width="1"/>
</g>
<g font-size="9" fill="#888" text-anchor="middle">
<text x="91.00" y="637.6">1~3月</text>
<text x="193.75" y="637.6">4~6月</text>
<text x="298.75" y="637.6">7~9月</text>
<text x="403.25" y="637.6">10~12月</text>
<text x="506.25" y="637.6">2015年1~3月</text>
<text x="610.00" y="637.6">4~6月</text>
<text x="713.75" y="637.6">7~9月</text>
<text x="818.75" y="637.6">10~12月</text>
</g>
<defs><linearGradient id="mg" x1="0" y1="0" x2="0" y2="1"><stop offset="0" stop-color="#f5f5f5"/><stop offset="1" stop-color="#ffffff"/></linearGradient></defs>
<rect x="35" y="645.5" width="902.5" height="37" fill="url(#mg)"/>
<path d="M35 645.5H937.5" stroke="#e2e2e2" stroke-width="1"/>
<path d="M35 663.8H937.5" stroke="#f1f1f1" stroke-width="1"/>
<text x="35" y="655.8" font-size="9" fill="#999">媒体指数</text>
<g font-size="9.2" fill="#888" text-anchor="end"><text x="934.5" y="656">820,000</text><text x="934.5" y="675.2">410,000</text></g>
<path d="M415.5 682.3 C418.5 682 419.8 645.3 422.6 645.3 C425.4 645.3 427 682 430 682.3Z" fill="#f3e8f8" stroke="#c890dc" stroke-width="1"/>
<path d="M858.8 682.3 C862 682 863 672.4 865.6 672.4 C868.2 672.4 869.4 682 872.5 682.3 M877 682.3 C880 682 880.5 680.4 882 680.4 C883.5 680.4 885 682 888 682.3" fill="#f3e8f8" stroke="#c890dc" stroke-width="1"/>
<path d="M35 682.5H937.5" stroke="#b76b98" stroke-width="1.6"/>
<path d="M415.5 682.9H430M858.8 682.9H872.5" stroke="#e8a860" stroke-width="1"/>
<rect x="34.5" y="694" width="903" height="21" fill="#fff"/>
<path d="M34.25 715 L34.25 708.75 L45.00 710.75 L50.00 714.50 L53.75 712.50 L60.00 703.75 L70.00 705.50 L80.00 706.25 L87.50 705.50 L92.50 707.00 L100.00 705.50 L115.00 706.25 L130.00 707.00 L137.50 708.75 L160.00 708.75 L167.50 707.00 L171.25 702.50 L180.00 700.00 L190.00 701.25 L200.00 704.50 L209.00 708.75 L217.50 711.25 L222.00 714.50 L226.00 708.00 L235.00 706.25 L245.00 705.50 L250.00 707.00 L257.50 705.50 L267.50 708.00 L272.50 706.25 L287.50 706.25 L292.50 707.50 L297.50 706.25 L305.00 708.00 L320.00 708.75 L325.50 707.50 L335.00 710.00 L341.25 714.50 L346.25 710.00 L355.00 708.25 L367.50 708.00 L375.00 710.00 L383.75 711.25 L395.00 712.50 L403.00 714.50 L410.00 706.25 L415.50 702.00 L421.25 707.50 L430.00 711.25 L440.00 710.00 L450.00 711.25 L460.00 708.75 L465.00 710.00 L472.50 708.75 L485.00 711.25 L500.00 712.50 L510.00 712.00 L515.00 710.00 L518.75 708.00 L525.00 710.50 L535.00 710.00 L545.00 710.75 L553.75 710.00 L560.00 711.25 L572.50 713.75 L580.00 707.50 L585.75 697.00 L590.00 705.50 L600.00 707.50 L612.50 708.75 L621.25 702.50 L627.50 707.00 L640.00 708.75 L655.00 711.25 L665.00 710.00 L675.00 709.50 L685.00 708.00 L692.50 707.00 L700.00 708.00 L710.00 710.00 L717.50 706.25 L725.00 705.50 L740.00 707.00 L750.00 708.75 L756.25 712.50 L761.25 703.75 L767.50 704.50 L773.75 701.25 L776.75 695.00 L780.00 702.50 L790.00 707.00 L793.75 708.00 L805.00 706.25 L820.00 705.50 L832.50 707.50 L847.50 705.50 L857.50 708.00 L870.00 706.25 L880.00 707.50 L887.50 705.50 L900.00 706.25 L903.75 703.75 L910.00 708.00 L920.00 711.25 L927.50 713.00 L931.25 705.50 L933.75 700.00 L937.00 698.00 L937 715Z" fill="#dedede"/>
<path d="M34.5 715.2H937.5" stroke="#bdbdbd" stroke-width="1"/>
<path d="M34.5 693.8V715.5" stroke="#bdbdbd" stroke-width="1"/>
<g stroke="#999" stroke-width="1">
<path d="M34.25 711.5V715"/>
<path d="M92.55 711.5V715"/>
<path d="M150.85 711.5V715"/>
<path d="M209.15 711.5V715"/>
<path d="M267.45 711.5V715"/>
<path d="M325.75 711.5V715"/>
<path d="M384.05 711.5V715"/>
<path d="M442.35 711.5V715"/>
<path d="M500.65 711.5V715"/>
<path d="M558.95 711.5V715"/>
<path d="M617.25 711.5V715"/>
<path d="M675.55 711.5V715"/>
<path d="M733.85 711.5V715"/>
<path d="M792.15 711.5V715"/>
<path d="M850.45 711.5V715"/>
<path d="M908.75 711.5V715"/>
</g>
<g font-size="9.5" fill="#999"><text x="34.3" y="708.4">2011</text>
<text x="209.0" y="708.4" text-anchor="middle">2012</text>
<text x="384.0" y="708.4" text-anchor="middle">2013</text>
<text x="558.5" y="708.4" text-anchor="middle">2014</text>
<text x="734.0" y="708.4" text-anchor="middle">2015</text>
</g>
<path d="M34 694H937.5" stroke="#9dbef4" stroke-width="1.8"/>
<rect x="557" y="694" width="380.5" height="21" fill="#9ccbf0" fill-opacity="0.55"/>
<path d="M557 715.2H937.5" stroke="#6f9fe6" stroke-width="1"/>
<path d="M553.90 695.2 a1.5 1.5 0 0 1 1.5 -1.5 h2.6 a1.5 1.5 0 0 1 1.5 1.5 V710.5 L556.70 715.4 L553.90 710.5Z" fill="#1f6fe6"/>
<path d="M556.70 701V706" stroke="#6aa2f5" stroke-width="0.8"/>
<path d="M933.50 695.2 a1.5 1.5 0 0 1 1.5 -1.5 h2.6 a1.5 1.5 0 0 1 1.5 1.5 V710.5 L936.30 715.4 L933.50 710.5Z" fill="#1f6fe6"/>
<path d="M936.30 701V706" stroke="#6aa2f5" stroke-width="0.8"/>
</svg>
<div class="abs tabbtn"><span class="sq" style="transform:scaleX(.962)">La tendencia general</span>
<svg class="abs" style="left:12px;top:7px" width="17" height="17" viewBox="0 0 17 17"><path d="M7.7 1.5A7.1 7.1 0 1 0 14.8 8.6H7.7Z" fill="#fff"/><path d="M9.1 0.6A6.6 6.6 0 0 1 15.7 7.2H9.1Z" fill="#fff"/><path d="M11.8 2.3L10.2 6.1H14.4V4Z" fill="#2473f0"/></svg></div>
<svg class="abs" style="left:235px;top:397px" width="18" height="16" viewBox="0 0 18 16"><rect x="1.5" y="1.8" width="14.5" height="10" rx="1" fill="none" stroke="#8c8c8c" stroke-width="1.4"/><path d="M5 14.2H12.5" stroke="#8c8c8c" stroke-width="1.3"/></svg>
<div class="abs tab" style="left:257px">PC趋势</div>
<svg class="abs" style="left:349px;top:397px" width="14" height="16" viewBox="0 0 14 16"><rect x="0.9" y="0.9" width="11.2" height="13.4" rx="1.2" fill="none" stroke="#8c8c8c" stroke-width="1.4"/><path d="M1 13.2H12" stroke="#8c8c8c" stroke-width="2.2"/><rect x="5.5" y="12.8" width="2" height="1" fill="#fff"/></svg>
<div class="abs tab" style="left:371px">Tendencias móviles</div>
<div class="abs hr2"></div>
<div class="abs" style="left:721px;top:400px;font-size:8.8px;letter-spacing:0.05px;color:#888;line-height:13px">Los últimos</div>
<div class="abs rng" style="left:782px">7</div>
<div class="abs rng on" style="left:813.5px">30</div>
<div class="abs rng" style="left:845px">90</div>
<div class="abs rng" style="left:876px;letter-spacing:-0.2px">medio</div>
<div class="abs rng" style="left:907px;letter-spacing:-0.2px">todos</div>
<div class="abs lgs" style="left:35.0px;background:#3ab9ee"></div><div class="abs lg" style="left:47.5px">房地产</div>
<div class="abs lgs" style="left:79.0px;background:#2db31d"></div><div class="abs lg" style="left:92.5px">行政法</div>
<div class="abs lgs" style="left:124.0px;background:#ef9138"></div><div class="abs lg" style="left:137.0px">咨询</div>
<div class="abs lgs" style="left:159.5px;background:#f0569a"></div><div class="abs lg" style="left:172.5px">土地管理</div>
<div class="abs lgs" style="left:213.5px;background:#a669c4"></div><div class="abs lg" style="left:226.3px">投资</div>
<div class="abs" style="left:888px;top:453px;width:9px;height:10px;border:1px solid #d4d4d4;border-bottom-color:#a9c4ee;background:#fff"></div>
<div class="abs" style="left:901px;top:451px;font-size:9.2px;color:#333;line-height:12px">significar</div>

<div class="abs side" style="top:329px;height:41px;border-right:0;border-bottom:0;width:15px;overflow:hidden"><svg class="abs" style="left:3px;top:3px" width="9" height="10" viewBox="0 0 10 11"><path d="M7.6 2L2.2 5.4L7.6 8.9" fill="none" stroke="#333" stroke-width="1.3"/><circle cx="7.8" cy="1.9" r="1.7" fill="#333"/><circle cx="2" cy="5.4" r="1.7" fill="#333"/><circle cx="7.8" cy="9" r="1.7" fill="#333"/></svg><span style="top:15px">cuota</span></div>
<div class="abs side" style="top:372px;height:42px"><svg class="abs" style="left:0.5px;top:2.5px" width="11" height="10" viewBox="0 0 12 11"><path d="M6 0L7.6 3.8L11.7 4.1L8.6 6.7L9.6 10.7L6 8.5L2.4 10.7L3.4 6.7L0.3 4.1L4.4 3.8Z" fill="#8c8c8c"/></svg><span style="top:16px">recoger</span></div>
<div class="abs side" style="top:417px;height:42px"><svg class="abs" style="left:1px;top:4px" width="12" height="10" viewBox="0 0 12 10"><path d="M0.5 0.3H10.8V6.2H7.6L8.3 8.6L5.4 6.2H0.5Z" fill="#949494"/><path d="M2.3 3.2H3.8M4.9 3.2H6.4M7.5 3.2H9" stroke="#f5f5f5" stroke-width="1.1"/></svg><span style="top:15px">realimentación</span></div>
<div class="abs side" style="top:462px;height:40px"><svg class="abs" style="left:2px;top:2.5px" width="9" height="10" viewBox="0 0 10 11"><path d="M0.8 0.6H9" stroke="#949494" stroke-width="1.1"/><path d="M4.9 2.4L8.9 6.4H6.4V10.4H3.4V6.4H0.9Z" fill="#949494"/></svg><span style="top:14px">top</span></div>

</body>
</html>
